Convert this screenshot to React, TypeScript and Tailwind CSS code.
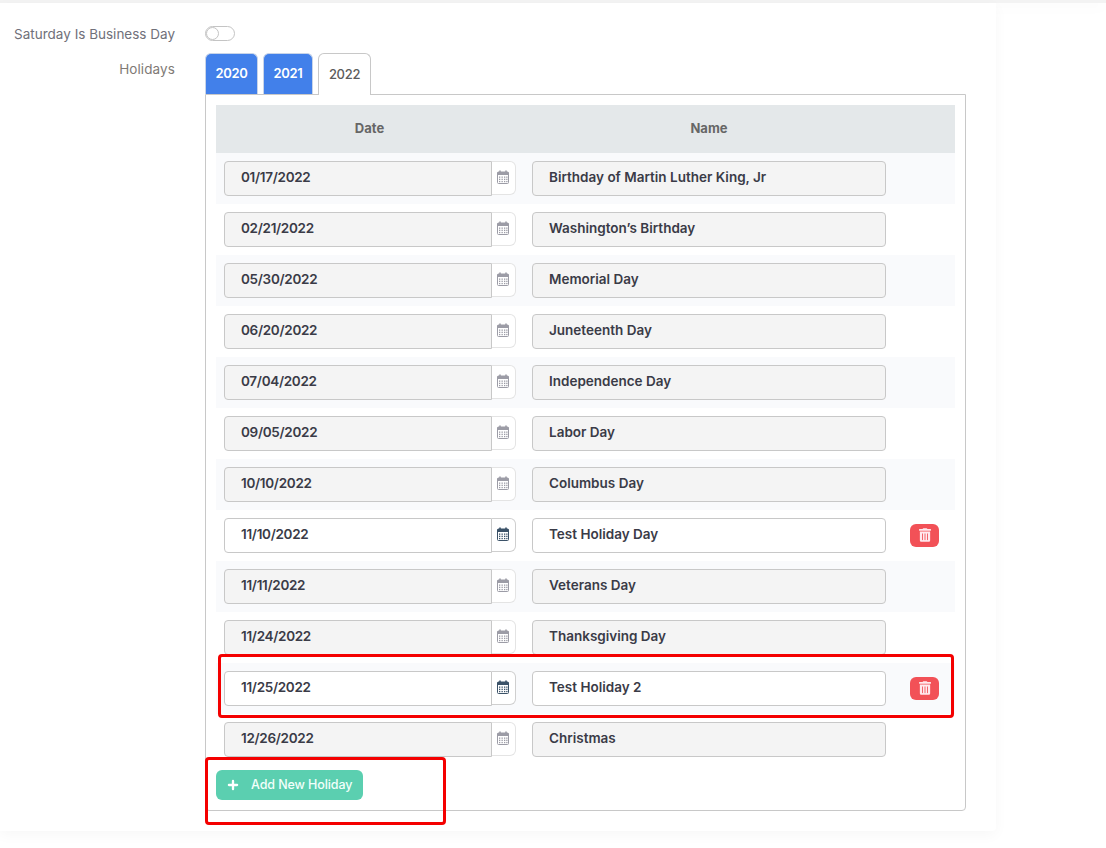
import { Plus } from "lucide-react";
import { FaTrashAlt } from "react-icons/fa";

const holidays = [
  { date: "01/17/2022", name: "Birthday of Martin Luther King, Jr" },
  { date: "02/21/2022", name: "Washington’s Birthday" },
  { date: "05/30/2022", name: "Memorial Day" },
  { date: "06/20/2022", name: "Juneteenth Day" },
  { date: "07/04/2022", name: "Independence Day" },
  { date: "09/05/2022", name: "Labor Day" },
  { date: "10/10/2022", name: "Columbus Day" },
  { date: "11/10/2022", name: "Test Holiday Day", custom: true },
  { date: "11/11/2022", name: "Veterans Day" },
  { date: "11/24/2022", name: "Thanksgiving Day" },
  { date: "11/25/2022", name: "Test Holiday 2", custom: true },
  { date: "12/26/2022", name: "Christmas" },
];

function CalendarIcon({ active }: { active?: boolean }) {
  const c = active ? "#3b5268" : "#9c9ca6";
  return (
    <svg width="12" height="14" viewBox="0 0 12 14" className="-ml-[1px] -mt-[2px]">
      <rect x="2.2" y="0.5" width="1.6" height="2.6" fill={c} />
      <rect x="8.2" y="0.5" width="1.6" height="2.6" fill={c} />
      <rect x="0.5" y="2" width="11" height="11.5" rx="1" fill="none" stroke={c} />
      <rect x="0.5" y="2" width="11" height="3" fill={c} />
      {[6.5, 8.7, 10.9].map((y) =>
        [2, 4.5, 7, 9.2].map((x) => <rect key={`${x}-${y}`} x={x} y={y} width="1.3" height="1.3" fill={c} />)
      )}
    </svg>
  );
}

function HolidayRow({ date, name, custom, striped }: { date: string; name: string; custom?: boolean; striped: boolean }) {
  const field = custom ? "bg-white" : "bg-[#f4f4f4]";
  return (
    <div className={`grid h-[51px] grid-cols-[307px_372px_60px] items-start pt-2 ${striped ? "bg-[#f9fafc]" : "bg-white"}`}>
      <div className="flex pl-2">
        <div className={`flex h-[35px] w-[268px] items-center rounded-l border border-[#c8c8c8] pb-[2px] pl-4 text-[13.5px] font-semibold tracking-[-0.3px] text-[#3a3b47] ${field}`}>
          {date}
        </div>
        <div className={`flex h-[34px] w-[24px] items-center justify-center rounded-r-md border border-l-0 ${custom ? "border-[#cfcfcf]" : "border-[#e4e4e4]"} bg-white`}>
          <CalendarIcon active={custom} />
        </div>
      </div>
      <div className={`ml-[9px] flex h-[35px] w-[354px] items-center rounded border border-[#c8c8c8] pb-[2px] pl-4 text-[13.5px] font-semibold text-[#3a3b47] ${field}`}>
        {name}
      </div>
      {custom && (
        <button className="mt-[6px] ml-[15px] flex h-[23px] w-[29px] items-center justify-center rounded-md bg-[#f25157] text-[#ffe9ee]">
          <FaTrashAlt className="-mt-[1px] h-[14px] w-[12px]" />
        </button>
      )}
    </div>
  );
}

export default function App() {
  return (
    <div className="relative h-[848px] overflow-hidden bg-white font-['Inter','Liberation_Sans',sans-serif]">
      <div className="h-[3px] bg-[#f3f3f3] shadow-[0_3px_14px_rgba(0,0,0,0.05)]" />
      <div className="h-[828px] w-[996px] rounded-br bg-white pt-[23px] shadow-[0_4px_14px_rgba(0,0,0,0.035)]">
        <div className="flex h-[27px] items-start">
          <div className="-mt-[1px] w-[175px] text-right text-[13.5px] leading-[18px] text-[#70707a]">Saturday Is Business Day</div>
          <div className="ml-[30px] flex h-[15px] w-[30px] items-center rounded-full border border-[#c4c4c4] bg-white">
            <span className="h-[13px] w-[13px] rounded-full border border-[#c4c4c4] bg-white" />
          </div>
        </div>
        <div className="flex items-start">
          <div className="w-[175px] pt-[7px] text-right text-[13.5px] leading-[18px] tracking-[0.1px] text-[#807a76]">Holidays</div>
          <div className="ml-[30px] w-[761px]">
            <div className="relative z-10 flex h-[41px] items-start gap-[5px] text-[13px] tracking-[-0.3px]">
              <div className="flex h-[41px] w-[53px] items-center justify-center rounded-t-md border border-b-0 border-[#c8d4e8] bg-[#4280ea] font-semibold text-white">2020</div>
              <div className="flex h-[41px] w-[50px] items-center justify-center rounded-t-md border border-b-0 border-[#c8d4e8] bg-[#4280ea] font-semibold text-white">2021</div>
              <div className="flex h-[42px] w-[53px] items-center justify-center rounded-t-md border border-b-0 border-[#c8c8c8] bg-white font-medium text-[#5c5c5c]">2022</div>
            </div>
            <div className="h-[717px] rounded-b border border-[#c8c8c8] px-[10px] pt-[10px]">
              <div className="grid h-[48px] grid-cols-[307px_372px_60px] items-center bg-[#e4e8ea] text-center text-[13px] font-bold text-[#666666]">
                <div>Date</div>
                <div>Name</div>
                <div />
              </div>
              {holidays.map((h, i) => (
                <HolidayRow key={h.date} date={h.date} name={h.name} custom={h.custom} striped={i % 2 === 0} />
              ))}
              <button className="mt-[5px] flex h-[30px] w-[147px] items-center rounded-md bg-[#5bcfb0] pl-[10px] text-[12.5px] font-medium tracking-[-0.1px] text-[#f2fffb]">
                <Plus className="h-[14px] w-[14px] text-white" strokeWidth={4} />
                <span className="ml-[11px]">Add New Holiday</span>
              </button>
            </div>
          </div>
        </div>
      </div>
      <div className="absolute left-[218px] top-[654px] h-[64px] w-[736px] rounded-sm border-[3px] border-[#f40000]" />
      <div className="absolute left-[205px] top-[757px] h-[68px] w-[241px] rounded-sm border-[3px] border-[#f40000]" />
    </div>
  );
}
